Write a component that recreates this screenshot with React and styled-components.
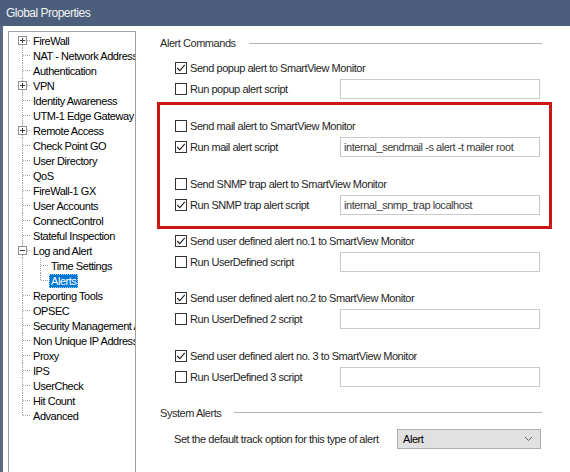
import React from 'react';
import styled, { createGlobalStyle } from 'styled-components';

const GlobalStyle = createGlobalStyle`
  html, body {
    margin: 0;
    padding: 0;
    background: #ffffff;
  }
  body {
    font-family: "Liberation Sans", Arial, sans-serif;
    font-size: 11px;
    color: #1e1e1e;
  }
`;

const treeItems = [
  { label: 'FireWall', toggle: 'plus' },
  { label: 'NAT - Network Address Translation' },
  { label: 'Authentication' },
  { label: 'VPN', toggle: 'plus' },
  { label: 'Identity Awareness' },
  { label: 'UTM-1 Edge Gateway' },
  { label: 'Remote Access', toggle: 'plus' },
  { label: 'Check Point GO' },
  { label: 'User Directory' },
  { label: 'QoS' },
  { label: 'FireWall-1 GX' },
  { label: 'User Accounts' },
  { label: 'ConnectControl' },
  { label: 'Stateful Inspection' },
  { label: 'Log and Alert', toggle: 'minus' },
  { label: 'Time Settings', depth: 1 },
  { label: 'Alerts', depth: 1, lastChild: true, selected: true },
  { label: 'Reporting Tools' },
  { label: 'OPSEC' },
  { label: 'Security Management Access' },
  { label: 'Non Unique IP Address Ranges' },
  { label: 'Proxy' },
  { label: 'IPS' },
  { label: 'UserCheck' },
  { label: 'Hit Count' },
  { label: 'Advanced' },
];

const groupsBefore = [
  {
    send: { checked: true, label: 'Send popup alert to SmartView Monitor' },
    run: { checked: false, label: 'Run popup alert script', value: '' },
  },
];

const highlighted = [
  {
    send: { checked: false, label: 'Send mail alert to SmartView Monitor' },
    run: { checked: true, label: 'Run mail alert script', value: 'internal_sendmail -s alert -t mailer root' },
  },
  {
    send: { checked: false, label: 'Send SNMP trap alert to SmartView Monitor' },
    run: { checked: true, label: 'Run SNMP trap alert script', value: 'internal_snmp_trap localhost' },
  },
];

const groupsAfter = [
  {
    send: { checked: true, label: 'Send user defined alert no.1 to SmartView Monitor' },
    run: { checked: false, label: 'Run UserDefined script', value: '' },
  },
  {
    send: { checked: true, label: 'Send user defined alert no.2 to SmartView Monitor' },
    run: { checked: false, label: 'Run UserDefined 2 script', value: '' },
  },
  {
    send: { checked: true, label: 'Send user defined alert no. 3 to SmartView Monitor' },
    run: { checked: false, label: 'Run UserDefined 3 script', value: '' },
  },
];

const DOT = '#a0a0a0';

const TreeGuide = ({ item, first, last }) => {
  const depth = item.depth || 0;
  const width = depth ? 40 : 22;
  const top = first ? 7.5 : 0;
  const bottom = last ? 7.5 : 15;
  return (
    <svg width={width} height={15} style={{ flex: 'none' }} shapeRendering="crispEdges">
      <line x1={13.5} y1={depth ? 0 : top} x2={13.5} y2={depth ? 15 : bottom} stroke={DOT} strokeDasharray="1 1" />
      {depth === 0 && (
        <line x1={item.toggle ? 18 : 14} y1={7.5} x2={21} y2={7.5} stroke={DOT} strokeDasharray="1 1" />
      )}
      {depth === 1 && (
        <>
          <line x1={31.5} y1={0} x2={31.5} y2={item.lastChild ? 7.5 : 15} stroke={DOT} strokeDasharray="1 1" />
          <line x1={32} y1={7.5} x2={39} y2={7.5} stroke={DOT} strokeDasharray="1 1" />
        </>
      )}
      {item.toggle && (
        <>
          <rect x={9.5} y={3.5} width={8} height={8} fill="#fff" stroke="#919191" />
          <line x1={11} y1={7.5} x2={16} y2={7.5} stroke="#3c3c3c" />
          {item.toggle === 'plus' && <line x1={13.5} y1={5} x2={13.5} y2={10} stroke="#3c3c3c" />}
        </>
      )}
    </svg>
  );
};

const CheckBox = ({ checked }) => (
  <Box>
    {checked && (
      <svg width="10" height="10" viewBox="0 0 10 10">
        <polyline points="1.2,5 3.8,7.6 8.8,1.8" fill="none" stroke="#222" strokeWidth="1.1" />
      </svg>
    )}
  </Box>
);

const AlertGroup = ({ send, run }) => (
  <Group>
    <OptionRow>
      <CheckLabel>
        <CheckBox checked={send.checked} />
        <span>{send.label}</span>
      </CheckLabel>
    </OptionRow>
    <OptionRow>
      <CheckLabel>
        <CheckBox checked={run.checked} />
        <span>{run.label}</span>
      </CheckLabel>
      <TextBox readOnly value={run.value} />
    </OptionRow>
  </Group>
);

export default function App() {
  return (
    <>
      <GlobalStyle />
      <Window>
        <TitleBar>Global Properties</TitleBar>
        <Body>
          <TreePanel>
            {treeItems.map((item, i) => (
              <TreeRow key={item.label}>
                <TreeGuide item={item} first={i === 0} last={i === treeItems.length - 1} />
                <TreeLabel $selected={item.selected}>{item.label}</TreeLabel>
              </TreeRow>
            ))}
          </TreePanel>
          <Content>
            <SectionHeader>
              <span>Alert Commands</span>
              <Rule />
            </SectionHeader>
            <AlertList>
              {groupsBefore.map((g) => (
                <AlertGroup key={g.send.label} {...g} />
              ))}
              <Highlight>
                {highlighted.map((g) => (
                  <AlertGroup key={g.send.label} {...g} />
                ))}
              </Highlight>
              {groupsAfter.map((g) => (
                <AlertGroup key={g.send.label} {...g} />
              ))}
            </AlertList>
            <SectionHeader $spaced>
              <span>System Alerts</span>
              <Rule />
            </SectionHeader>
            <TrackRow>
              <span>Set the default track option for this type of alert</span>
              <Select>
                <span>Alert</span>
                <svg width="9" height="6" viewBox="0 0 9 6">
                  <polyline points="1,1 4.5,4.5 8,1" fill="none" stroke="#606060" strokeWidth="1" />
                </svg>
              </Select>
            </TrackRow>
          </Content>
        </Body>
      </Window>
    </>
  );
}

const Window = styled.div`
  width: 570px;
  height: 472px;
  display: flex;
  flex-direction: column;
  overflow: hidden;
  letter-spacing: -0.45px;
`;

const TitleBar = styled.div`
  height: 26px;
  flex: none;
  display: flex;
  align-items: center;
  padding-left: 6px;
  background: #4b5f7d;
  color: #f3f3f3;
  font-size: 12px;
  letter-spacing: -0.5px;
`;

const Body = styled.div`
  flex: 1;
  min-height: 0;
  display: flex;
  border-left: 3px solid #5a6a82;
  background: #ffffff;
`;

const TreePanel = styled.div`
  flex: none;
  width: 126px;
  margin: 5px 0 0 5px;
  padding-top: 1px;
  border: 1px solid #a0a0a0;
  border-bottom: none;
  overflow: hidden;
  background: #ffffff;
`;

const TreeRow = styled.div`
  height: 15px;
  display: flex;
  align-items: center;
  white-space: nowrap;
`;

const TreeLabel = styled.span`
  padding: 0 2px;
  line-height: 14px;
  color: ${(p) => (p.$selected ? '#ffffff' : '#000000')};
  background: ${(p) => (p.$selected ? '#0078d7' : 'transparent')};
  outline: ${(p) => (p.$selected ? '1px dotted #9ccaf5' : 'none')};
  outline-offset: -1px;
`;

const Content = styled.div`
  flex: 1;
  padding: 9.5px 28px 0 24px;
`;

const SectionHeader = styled.div`
  height: 15px;
  display: flex;
  align-items: center;
  gap: 13px;
  color: #2a2a2a;
  margin-top: ${(p) => (p.$spaced ? '18px' : '0')};
`;

const Rule = styled.div`
  flex: 1;
  height: 1px;
  background: #b4b4b4;
`;

const AlertList = styled.div`
  display: flex;
  flex-direction: column;
  margin-top: 7px;
`;

const Group = styled.div`
  padding-left: 15px;

  & + & {
    margin-top: 15.5px;
  }
`;

const Highlight = styled.div`
  margin: 2.5px -10px 1.5px -3px;
  padding: 10.5px 0;
  border: 3px solid #cc1616;
`;

const OptionRow = styled.div`
  height: 21px;
  display: grid;
  grid-template-columns: 165px 200px;
  align-items: center;
`;

const CheckLabel = styled.label`
  display: flex;
  align-items: center;
  gap: 3px;
  white-space: nowrap;
`;

const Box = styled.span`
  width: 12px;
  height: 12px;
  box-sizing: border-box;
  border: 1px solid #333333;
  background: #ffffff;
  display: inline-flex;
  align-items: center;
  justify-content: center;
  flex: none;
`;

const TextBox = styled.input`
  height: 20px;
  box-sizing: border-box;
  margin: 0;
  padding: 0 3px;
  border: 1px solid #cacaca;
  background: #ffffff;
  font-family: "Liberation Sans", Arial, sans-serif;
  font-size: 11px;
  letter-spacing: -0.45px;
  color: #3a3a3a;
  outline: none;
`;

const TrackRow = styled.div`
  height: 21px;
  margin-top: 8px;
  padding-left: 14px;
  display: grid;
  grid-template-columns: 223px 144px;
  align-items: center;
  white-space: nowrap;
`;

const Select = styled.div`
  height: 20px;
  box-sizing: border-box;
  display: flex;
  align-items: center;
  justify-content: space-between;
  padding: 0 7px 0 5px;
  border: 1px solid #adadad;
  background: #e1e1e1;
  color: #000000;
`;
